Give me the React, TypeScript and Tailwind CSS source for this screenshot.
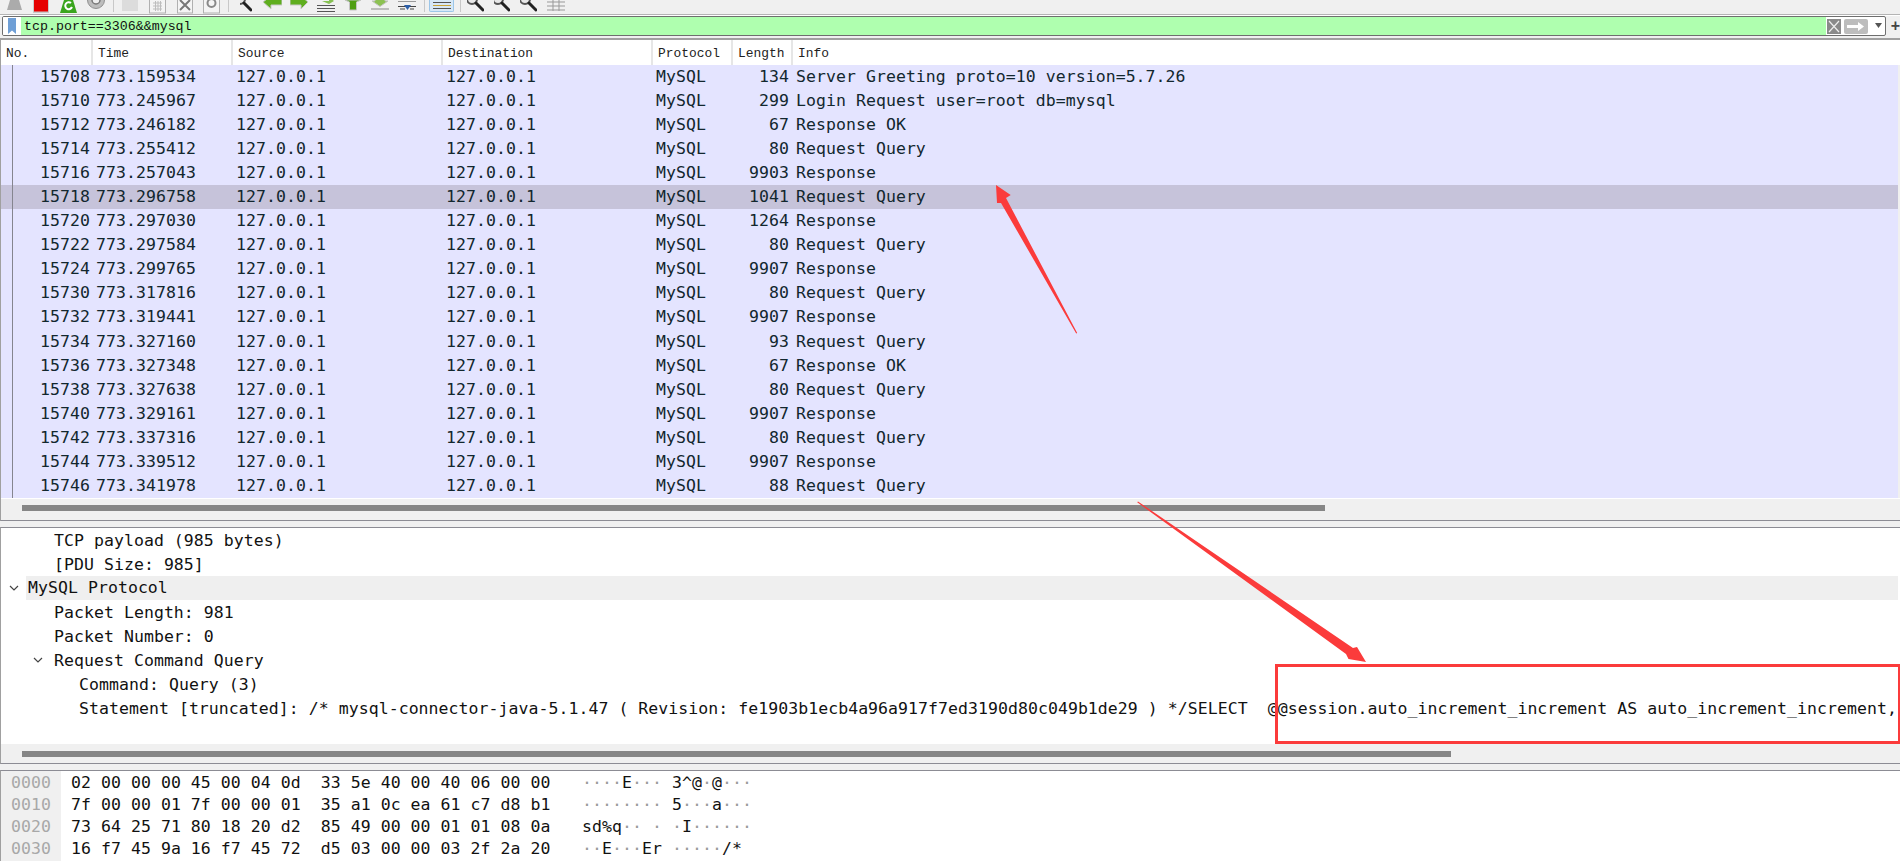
import React from "react";

const rows: [string, string, string, string][] = [
  ["15708", "773.159534", "134", "Server Greeting proto=10 version=5.7.26"],
  ["15710", "773.245967", "299", "Login Request user=root db=mysql"],
  ["15712", "773.246182", "67", "Response OK"],
  ["15714", "773.255412", "80", "Request Query"],
  ["15716", "773.257043", "9903", "Response"],
  ["15718", "773.296758", "1041", "Request Query"],
  ["15720", "773.297030", "1264", "Response"],
  ["15722", "773.297584", "80", "Request Query"],
  ["15724", "773.299765", "9907", "Response"],
  ["15730", "773.317816", "80", "Request Query"],
  ["15732", "773.319441", "9907", "Response"],
  ["15734", "773.327160", "93", "Request Query"],
  ["15736", "773.327348", "67", "Response OK"],
  ["15738", "773.327638", "80", "Request Query"],
  ["15740", "773.329161", "9907", "Response"],
  ["15742", "773.337316", "80", "Request Query"],
  ["15744", "773.339512", "9907", "Response"],
  ["15746", "773.341978", "88", "Request Query"],
];

const hexRows = [
  ["0000", "02 00 00 00 45 00 04 0d  33 5e 40 00 40 06 00 00", "····E··· 3^@·@···"],
  ["0010", "7f 00 00 01 7f 00 00 01  35 a1 0c ea 61 c7 d8 b1", "········ 5···a···"],
  ["0020", "73 64 25 71 80 18 20 d2  85 49 00 00 01 01 08 0a", "sd%q·· · ·I······"],
  ["0030", "16 f7 45 9a 16 f7 45 72  d5 03 00 00 03 2f 2a 20", "··E···Er ·····/*"],
];

function Ico({ w, className, children }: { w: number; className: string; children: React.ReactNode }) {
  return (
    <svg width={w} height={14} viewBox={`0 0 ${w} 14`} className={`shrink-0 ${className}`}>
      {children}
    </svg>
  );
}

function Sep({ className }: { className: string }) {
  return <div className={`w-px h-[12px] bg-[#c8c8c8] shrink-0 ${className}`} />;
}

function Mag({ className, w }: { className: string; w: number }) {
  return (
    <Ico w={w} className={className}>
      <circle cx={w - 12} cy={-1} r={5} fill="#e8e8e8" stroke="#555" strokeWidth={2} />
      <path d={`M${w - 8} 3 L${w - 1} 10`} stroke="#222" strokeWidth={3} strokeLinecap="round" />
    </Ico>
  );
}

function Chevron({ className }: { className: string }) {
  return (
    <svg width={10} height={6} viewBox="0 0 10 6" className={`shrink-0 ${className}`}>
      <path d="M1 1 L5 5 L9 1" fill="none" stroke="#444" strokeWidth={1.2} />
    </svg>
  );
}

function Toolbar() {
  return (
    <div className="flex h-[14px] overflow-hidden items-start">
      <Ico w={15} className="ml-[7px]">
        <path d="M3 0 H12 L15 10 H0 Z" fill="#ababab" />
      </Ico>
      <Ico w={16} className="ml-[11px]">
        <rect x={0} y={0} width={16} height={13} fill="#c9c9c9" />
        <rect x={1} y={0} width={14} height={11.5} fill="#e60000" />
      </Ico>
      <Ico w={17} className="ml-[11px]">
        <path d="M4 0 H13 L17 13 H0 Z" fill="#3aa51e" />
        <path d="M11 3 A3.5 3.5 0 1 0 12 7" fill="none" stroke="#fff" strokeWidth={2} />
      </Ico>
      <Ico w={18} className="ml-[10px]">
        <circle cx={9} cy={0} r={8.5} fill="#bdbdbd" stroke="#8f8f8f" />
        <circle cx={9} cy={0} r={4} fill="#eee" stroke="#777" strokeWidth={1.5} />
      </Ico>
      <Sep className="ml-[8px]" />
      <Ico w={16} className="ml-[8px]">
        <rect x={0} y={0} width={16} height={11} fill="#dcdcdc" />
      </Ico>
      <Ico w={17} className="ml-[11px]">
        <rect x={0.5} y={-2} width={16} height={15} fill="#f4f4f4" stroke="#b0b0b0" />
        <path d="M4 3H13M4 6H13M4 9H13M6.5 1V11M9 1V11M11.5 1V11" stroke="#bdbdbd" />
      </Ico>
      <Ico w={16} className="ml-[11px]">
        <rect x={0.5} y={-2} width={15} height={15} fill="#f4f4f4" stroke="#b0b0b0" />
        <path d="M3 0 L13 10 M13 0 L3 10" stroke="#777" strokeWidth={2} />
      </Ico>
      <Ico w={17} className="ml-[10px]">
        <rect x={0.5} y={-2} width={16} height={15} fill="#f4f4f4" stroke="#b0b0b0" />
        <circle cx={8.5} cy={3} r={4} fill="none" stroke="#888" strokeWidth={2} />
      </Ico>
      <Sep className="ml-[8px]" />
      <Mag w={12} className="ml-[11px]" />
      <Ico w={19} className="ml-[11px]">
        <path d="M8 -4 L0 2 L8 9 V5 H19 V-2 H8 Z" fill="#5fae1e" stroke="#c9c9c9" />
      </Ico>
      <Ico w={18} className="ml-[8px]">
        <path d="M11 -4 L18 2 L11 9 V5 H0 V-2 H11 Z" fill="#5fae1e" stroke="#c9c9c9" />
      </Ico>
      <Ico w={18} className="ml-[9px]">
        <path d="M0 5.5H18M0 8.5H18M0 11.5H18" stroke="#555" />
        <path d="M5 1H12V-3L17 1L12 4Z" fill="#6cb52a" opacity={0.8} />
      </Ico>
      <Ico w={16} className="ml-[10px]">
        <path d="M8 0 L16 0 L11.5 2 V10 H4.5 V2 L0 0 Z" fill="#4f9f12" stroke="#c4c4c4" />
      </Ico>
      <Ico w={18} className="ml-[10px]">
        <path d="M4 -2 H14 V1 H17 L9 6.5 L1 1 H4 Z" fill="#8cc152" stroke="#c4c4c4" />
        <rect x={0} y={8} width={18} height={2} fill="#bcbcbc" />
      </Ico>
      <Ico w={18} className="ml-[9px]">
        <path d="M0 1.5H18" stroke="#9a9a9a" />
        <path d="M0 6.5H18" stroke="#444" />
        <path d="M6 5 H13 L9.5 10 Z" fill="#2d5fa8" />
        <path d="M2 9H7M12 9H16" stroke="#444" />
      </Ico>
      <Sep className="ml-[8px]" />
      <div className="ml-[4px] w-[25px] h-[12px] shrink-0 bg-[#d7e8f7] border border-t-0 border-[#9cc6e8] rounded-b-[2px] flex flex-col items-center pt-[2px] gap-[2px]">
        <div className="w-[18px] h-px bg-[#555]" />
        <div className="w-[18px] h-px bg-[#c9a336]" />
        <div className="w-[18px] h-px bg-[#555]" />
      </div>
      <Sep className="ml-[6px]" />
      <Mag w={17} className="ml-[6px]" />
      <Mag w={16} className="ml-[10px]" />
      <Mag w={17} className="ml-[10px]" />
      <Ico w={18} className="ml-[10px]">
        <path d="M0 2H18M0 6H18M0 10H18M6 0V11M12 0V11" stroke="#999" />
      </Ico>
    </div>
  );
}

function FilterBar() {
  return (
    <div className="flex items-center h-[20px]">
      <div className="ml-[2px] w-[1884px] h-[20px] flex border border-[#6e6e6e] rounded-[2px] bg-white overflow-hidden">
        <div className="w-[18px] flex justify-center items-center shrink-0 bg-white">
          <svg width={10} height={17} viewBox="0 0 10 17">
            <path d="M1 0 H9 V16 L5 12.5 L1 16 Z" fill="#6f9fd6" />
          </svg>
        </div>
        <div className="flex-1 bg-[#afffaf] pl-[3px] pt-px text-[13.3px] leading-[18px] text-[#111] font-['Liberation_Mono',monospace]">
          tcp.port==3306&amp;&amp;mysql
        </div>
        <div className="w-[59px] shrink-0 flex items-center pl-px">
          <div className="w-[14px] h-[15px] bg-[#8a8a8a] flex items-center justify-center">
            <svg width={12} height={13} viewBox="0 0 12 13">
              <path d="M1 1 L11 12 M11 1 L1 12" stroke="#eee" strokeWidth={1.2} />
            </svg>
          </div>
          <div className="ml-[3px] w-[24px] h-[15px] bg-[#bdbdbd] rounded-[2px] flex items-center justify-center">
            <svg width={18} height={11} viewBox="0 0 18 11">
              <path d="M0 4 H11 V1 L17 5.5 L11 10 V7 H0 Z" fill="#fff" />
            </svg>
          </div>
          <svg width={7} height={5} viewBox="0 0 7 5" className="ml-[7px] mb-[2px]">
            <path d="M0 0 H7 L3.5 5 Z" fill="#555" />
          </svg>
        </div>
      </div>
      <span className="ml-[5px] text-[#444] text-[16px] font-bold font-['Liberation_Sans',sans-serif] leading-none">+</span>
    </div>
  );
}

function PacketList() {
  const head = "text-[12.9px] text-[#222] pl-[5px] pt-px border-r-2 border-[#e6e6e6] leading-[25px] shrink-0";
  const cell = "pl-[3px] shrink-0";
  return (
    <div className="h-[481px] flex flex-col border-b border-[#8c8c94] border-l border-l-[#a0a0a0] overflow-hidden">
      <div className="flex h-[25px] bg-white font-['Liberation_Mono',monospace]">
        <div className={`${head} w-[92px]`}>No.</div>
        <div className={`${head} w-[140px]`}>Time</div>
        <div className={`${head} w-[210px]`}>Source</div>
        <div className={`${head} w-[210px]`}>Destination</div>
        <div className={`${head} w-[80px]`}>Protocol</div>
        <div className={`${head} w-[60px]`}>Length</div>
        <div className="text-[12.9px] text-[#222] pl-[5px] pt-px leading-[25px]">Info</div>
      </div>
      <div className="flex flex-col w-[1897px] font-['DejaVu_Sans_Mono',monospace] text-[16.5px] tracking-[0.055px] text-[#12272e]">
        {rows.map((r) => (
          <div
            key={r[0]}
            className={`flex h-[24.06px] leading-[23px] whitespace-pre ${r[0] === "15718" ? "bg-[#c6c3da]" : "bg-[#e4e4ff]"}`}
          >
            <div className="w-[92px] shrink-0 flex justify-between pr-[3px]">
              <span className="ml-[11px] w-px bg-[#85858f]" />
              <span>{r[0]}</span>
            </div>
            <div className={`${cell} w-[140px]`}>{r[1]}</div>
            <div className={`${cell} w-[210px]`}>127.0.0.1</div>
            <div className={`${cell} w-[210px]`}>127.0.0.1</div>
            <div className={`${cell} w-[80px]`}>MySQL</div>
            <div className="w-[56px] shrink-0 text-right">{r[2]}</div>
            <div className="pl-[7px]">{r[3]}</div>
          </div>
        ))}
      </div>
      <div className="h-px bg-white shrink-0" />
      <div className="flex-1 bg-[#f0f0f0] pt-[6px]">
        <div className="ml-[21px] w-[1303px] h-[6px] bg-[#868686]" />
      </div>
    </div>
  );
}

function Detail() {
  const row = "h-[24px] leading-[24px] whitespace-pre";
  return (
    <div className="h-[237px] flex flex-col border-y border-[#8c8c94] border-l border-l-[#a0a0a0] overflow-hidden">
      <div className="h-[216px] bg-white font-['DejaVu_Sans_Mono',monospace] text-[16.5px] tracking-[0.055px] text-[#111] overflow-hidden">
        <div className={`${row} pl-[53px] pt-px`}>TCP payload (985 bytes)</div>
        <div className={`${row} pl-[53px] pt-px`}>[PDU Size: 985]</div>
        <div className={`${row} flex items-center`}>
          <Chevron className="ml-[8px]" />
          <div className="ml-[7px] flex-1 bg-[#efefef] pl-[2px] mr-[2px]">MySQL Protocol</div>
        </div>
        <div className={`${row} pl-[53px] pt-px`}>Packet Length: 981</div>
        <div className={`${row} pl-[53px] pt-px`}>Packet Number: 0</div>
        <div className={`${row} flex items-center`}>
          <Chevron className="ml-[32px]" />
          <div className="ml-[11px] pt-px">Request Command Query</div>
        </div>
        <div className={`${row} pl-[78px] pt-px`}>Command: Query (3)</div>
        <div className={`${row} pl-[78px] pt-px`}>
          Statement [truncated]: /* mysql-connector-java-5.1.47 ( Revision: fe1903b1ecb4a96a917f7ed3190d80c049b1de29 ) */SELECT  @@session.auto_increment_increment AS auto_increment_increment,
        </div>
      </div>
      <div className="flex-1 bg-[#f0f0f0] pt-[7px]">
        <div className="ml-[21px] w-[1429px] h-[6px] bg-[#868686]" />
      </div>
    </div>
  );
}

function HexPane() {
  return (
    <div className="flex-1 flex bg-white border-t border-[#8c8c94] border-l border-l-[#a0a0a0] overflow-hidden font-['DejaVu_Sans_Mono',monospace] text-[16.5px] tracking-[0.055px]">
      <div className="w-[60px] shrink-0 bg-[#f0f0f0] text-[#a8a8a8] pl-[10px] pt-px">
        {hexRows.map((h) => (
          <div key={h[0]} className="h-[22px] leading-[22px]">{h[0]}</div>
        ))}
      </div>
      <div className="w-[521px] shrink-0 pl-[10px] pt-px text-[#111] whitespace-pre">
        {hexRows.map((h) => (
          <div key={h[0]} className="h-[22px] leading-[22px]">{h[1]}</div>
        ))}
      </div>
      <div className="text-[#111] whitespace-pre pt-px">
        {hexRows.map((h) => (
          <div key={h[0]} className="h-[22px] leading-[22px]">
            {h[2].split("").map((c, i) => (
              <span key={i} className={c === "·" ? "text-[#9a9a9a]" : ""}>{c}</span>
            ))}
          </div>
        ))}
      </div>
    </div>
  );
}

export default function App() {
  return (
    <div className="relative w-[1900px] h-[861px] bg-[#f0f0f0] overflow-hidden flex flex-col">
      <Toolbar />
      <div className="h-px bg-[#b4b4b4]" />
      <div className="h-px bg-white" />
      <FilterBar />
      <div className="h-[2px]" />
      <div className="h-[2px] bg-[#a0a0a0]" />
      <PacketList />
      <div className="h-[6px]" />
      <Detail />
      <div className="h-[6px]" />
      <HexPane />
      <svg className="absolute left-0 top-0 pointer-events-none" width={1900} height={861} viewBox="0 0 1900 861">
        <path d="M996 185 L1010.7 195 L1006 198 L1077.2 333 L1076.2 333.4 L1001 203 L997 203 Z" fill="#fb3b3b" />
        <path d="M1138 501.5 L1353 648 L1357 647 L1366 662 L1348.5 659 L1346 654 L1137.2 502.3 Z" fill="#fb3b3b" />
      </svg>
      <div className="absolute left-[1275px] top-[664px] w-[626px] h-[80px] border-[3px] border-[#fb3b3b]" />
    </div>
  );
}
